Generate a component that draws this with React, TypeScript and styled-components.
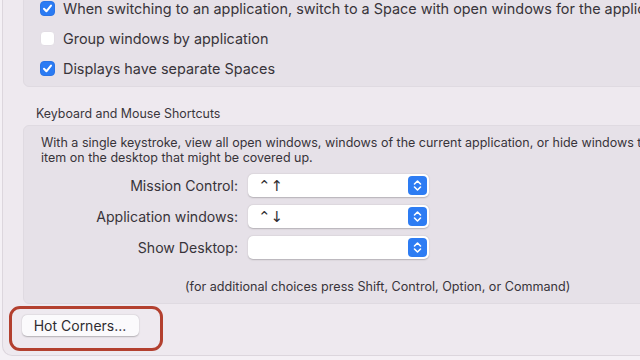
import React from 'react';
import styled, { createGlobalStyle } from 'styled-components';

const GlobalStyle = createGlobalStyle`
  html, body {
    margin: 0;
    padding: 0;
    width: 640px;
    height: 360px;
    overflow: hidden;
    background: #f4f0f5;
  }
  body {
    font-family: Inter, "Noto Sans", "DejaVu Sans", sans-serif;
    color: #38343a;
  }
`;

const Window = styled('div')`
  margin-left: 2px;
  margin-top: -11px;
  height: 367px;
  width: 638px;
  overflow: hidden;
  background: #eee9ef;
  border-left: 1px solid #dcd6dd;
  border-bottom: 1px solid #dcd6dd;
  border-bottom-left-radius: 10px;
  padding-left: 20px;
  box-sizing: border-box;
  display: flex;
  flex-direction: column;
`;

const Panel = styled('div')`
  background: #e6e1e8;
  border: 1px solid #dfdae1;
  border-radius: 6px;
  width: 710px;
  flex: none;
  box-sizing: border-box;
`;

const CheckList = styled(Panel)`
  display: flex;
  flex-direction: column;
  gap: 14px;
  padding: 10px 0 10px 16px;
`;

const CheckRow = styled('label')`
  display: flex;
  align-items: center;
  gap: 8px;
  height: 16px;
  font-size: 14.4px;
  white-space: nowrap;
`;

const Box = styled('span')<{ checked?: boolean }>`
  width: 15px;
  height: 15px;
  border-radius: 4px;
  flex: none;
  box-sizing: border-box;
  display: flex;
  align-items: center;
  justify-content: center;
  background: ${props => (props.checked ? '#2b7bf3' : '#ffffff')};
  border: 1px solid ${props => (props.checked ? '#2a74e6' : '#e2dde4')};
`;

const Heading = styled('div')`
  margin: 19px 0 4px 13px;
  font-size: 12.4px;
  line-height: 15px;
  color: #3a363c;
`;

const Shortcuts = styled(Panel)`
  padding: 9px 0 9px 17px;
`;

const Description = styled('p')`
  margin: 0;
  font-size: 12.5px;
  line-height: 15px;
  white-space: nowrap;
`;

const Grid = styled('div')`
  display: grid;
  grid-template-columns: 197px 181px;
  column-gap: 10px;
  row-gap: 8px;
  align-items: center;
  margin-top: 9px;
`;

const Label = styled('div')`
  text-align: right;
  font-size: 14.1px;
  white-space: nowrap;
`;

const Select = styled('div')`
  height: 23px;
  background: #ffffff;
  border-radius: 5px;
  box-shadow: 0 0.5px 1.5px rgba(0, 0, 0, 0.22);
  display: flex;
  align-items: center;
  justify-content: space-between;
  padding: 0 2px 0 10px;
  box-sizing: border-box;
  font-family: "DejaVu Sans", sans-serif;
  font-size: 15px;
  color: #2e2b30;
`;

const Stepper = styled('span')`
  width: 19px;
  height: 19px;
  border-radius: 4px;
  background: #2d7cf3;
  display: flex;
  align-items: center;
  justify-content: center;
`;

const Note = styled('div')`
  margin: 20px 0 0 144px;
  font-size: 12.6px;
  line-height: 15px;
  white-space: nowrap;
`;

const Footer = styled('div')`
  margin: 2px 0 0 -14px;
  width: 154px;
  height: 45px;
  flex: none;
  border: 3.5px solid #b3402f;
  border-radius: 11px;
  display: flex;
  align-items: flex-start;
  padding: 6px 0 0 9.5px;
  box-sizing: border-box;
`;

const Button = styled('button')`
  height: 21px;
  width: 117px;
  padding: 0;
  border: none;
  border-radius: 5px;
  background: #fbfafc;
  box-shadow: 0 0.5px 1.5px rgba(0, 0, 0, 0.25);
  font-family: Inter, "Noto Sans", sans-serif;
  font-size: 14px;
  color: #2f2c31;
`;

const Check = () => (
  <svg width="11" height="11" viewBox="0 0 11 11">
    <path d="M2 5.8 L4.4 8.3 L9 2.6" fill="none" stroke="#fff" strokeWidth="2" strokeLinecap="round" strokeLinejoin="round" />
  </svg>
);

const Chevrons = () => (
  <svg width="9" height="13" viewBox="0 0 9 13">
    <path d="M1.5 5 L4.5 2 L7.5 5 M1.5 8 L4.5 11 L7.5 8" fill="none" stroke="#fff" strokeWidth="1.6" strokeLinecap="round" strokeLinejoin="round" />
  </svg>
);

const options = [
  { label: 'When switching to an application, switch to a Space with open windows for the application', checked: true },
  { label: 'Group windows by application', checked: false },
  { label: 'Displays have separate Spaces', checked: true },
];

const shortcuts = [
  { label: 'Mission Control:', value: '⌃↑' },
  { label: 'Application windows:', value: '⌃↓' },
  { label: 'Show Desktop:', value: '' },
];

export default function App() {
  return (
    <>
      <GlobalStyle />
      <Window>
        <CheckList>
          {options.map(o => (
            <CheckRow key={o.label}>
              <Box checked={o.checked}>{o.checked && <Check />}</Box>
              {o.label}
            </CheckRow>
          ))}
        </CheckList>
        <Heading>Keyboard and Mouse Shortcuts</Heading>
        <Shortcuts>
          <Description>
            With a single keystroke, view all open windows, windows of the current application, or hide windows to locate an
            <br />
            item on the desktop that might be covered up.
          </Description>
          <Grid>
            {shortcuts.map(s => (
              <React.Fragment key={s.label}>
                <Label>{s.label}</Label>
                <Select>
                  <span>{s.value}</span>
                  <Stepper>
                    <Chevrons />
                  </Stepper>
                </Select>
              </React.Fragment>
            ))}
          </Grid>
          <Note>(for additional choices press Shift, Control, Option, or Command)</Note>
        </Shortcuts>
        <Footer>
          <Button>Hot Corners...</Button>
        </Footer>
      </Window>
    </>
  );
}
